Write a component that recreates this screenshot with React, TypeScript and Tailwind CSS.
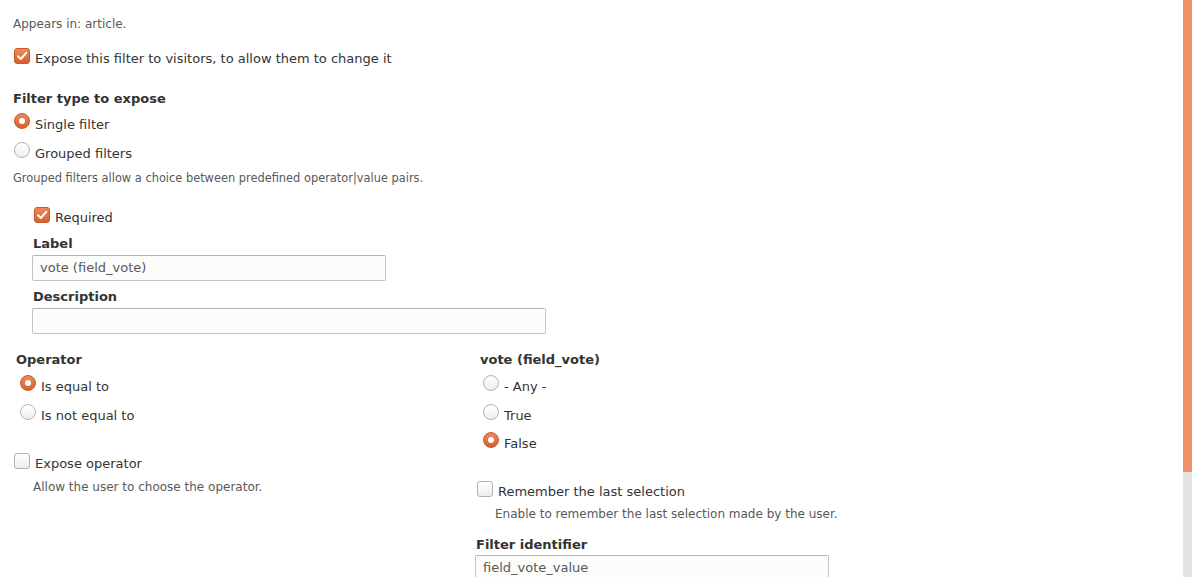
import React from "react";

const Checkbox = ({ checked = false, shift = "mb-[6px]" }: { checked?: boolean; shift?: string }) => {
  return (
    <span
      className={`${shift} flex h-4 w-4 shrink-0 items-center justify-center rounded-[3px] border ${
        checked
          ? "border-[#c4592b] bg-gradient-to-b from-[#ec8a5b] to-[#d5612f]"
          : "border-[#b3b3b3] bg-gradient-to-b from-white to-[#ededed]"
      }`}
    >
      {checked && (
        <svg width="12" height="12" viewBox="0 0 12 12">
          <path d="M2 6.3 L4.8 9 L10.2 2.8" fill="none" stroke="white" strokeWidth="2" strokeLinecap="round" strokeLinejoin="round" />
        </svg>
      )}
    </span>
  );
};

const Radio = ({ checked = false }: { checked?: boolean }) => {
  return (
    <span
      className={`mb-[8px] flex h-4 w-4 shrink-0 items-center justify-center rounded-full border ${
        checked
          ? "border-[#c4592b] bg-gradient-to-b from-[#ec8a5b] to-[#d5612f]"
          : "border-[#b3b3b3] bg-gradient-to-b from-white to-[#eeeeee]"
      }`}
    >
      {checked && <span className="h-[6px] w-[6px] rounded-full bg-white" />}
    </span>
  );
};

const Heading = ({ children, className = "" }: { children: React.ReactNode; className?: string }) => (
  <div className={`flex h-[18px] items-center text-[13px] font-bold text-[#333] ${className}`}>{children}</div>
);

const Desc = ({ children, className = "" }: { children: React.ReactNode; className?: string }) => (
  <div className={`flex h-4 items-center text-[#595959] ${className}`}>{children}</div>
);

const Option = ({
  children,
  className = "",
  control,
}: {
  children: React.ReactNode;
  className?: string;
  control: React.ReactNode;
}) => (
  <div className={`flex h-5 items-center gap-[5px] text-[13px] text-[#333] ${className}`}>
    {control}
    <span>{children}</span>
  </div>
);

const TextInput = ({ value = "", className = "" }: { value?: string; className?: string }) => (
  <div
    className={`flex h-[26px] items-center rounded-[2px] border border-[#c4c4c4] border-t-[#b4b4b4] bg-[#fcfcfa] px-[7px] text-[13px] text-[#595959] ${className}`}
  >
    {value}
  </div>
);

export default function App() {
  return (
    <div
      className="flex h-[577px] w-[1192px] overflow-hidden bg-white"
      style={{ fontFamily: '"DejaVu Sans", Verdana, sans-serif' }}
    >
      <div className="flex-1 pl-[13px]">
        <div className="mt-[15px] flex h-[18px] items-center text-[12px] text-[#595959]">Appears in: article.</div>
        <Option className="mt-[16px] ml-[1px]" control={<Checkbox checked />}>
          Expose this filter to visitors, to allow them to change it
        </Option>

        <Heading className="mt-[21px]">Filter type to expose</Heading>
        <Option className="mt-[7px] ml-[1px]" control={<Radio checked />}>
          Single filter
        </Option>
        <Option className="mt-[9px] ml-[1px]" control={<Radio />}>
          Grouped filters
        </Option>
        <Desc className="mt-[7px] text-[11.4px]">Grouped filters allow a choice between predefined operator|value pairs.</Desc>

        <div className="pl-[19px]">
          <Option className="mt-[21px] ml-[2px]" control={<Checkbox checked />}>
            Required
          </Option>
          <Heading className="mt-[7px] ml-[1px]">Label</Heading>
          <TextInput className="mt-[2px] w-[354px]" value="vote (field_vote)" />
          <Heading className="mt-[7px] ml-[1px]">Description</Heading>
          <TextInput className="mt-[2px] w-[514px]" />
        </div>

        <div className="mt-[17px] grid grid-cols-[462px_1fr]">
          <div>
            <Heading className="ml-[3px]">Operator</Heading>
            <Option className="mt-[8px] ml-[7px]" control={<Radio checked />}>
              Is equal to
            </Option>
            <Option className="mt-[9px] ml-[7px]" control={<Radio />}>
              Is not equal to
            </Option>
            <Option className="mt-[28px] ml-[1px]" control={<Checkbox shift="mb-[7px]" />}>
              Expose operator
            </Option>
            <Desc className="mt-[5px] ml-[20px] text-[12px]">Allow the user to choose the operator.</Desc>
          </div>
          <div>
            <Heading className="ml-[5px]">vote (field_vote)</Heading>
            <Option className="mt-[8px] ml-[8px]" control={<Radio />}>
              - Any -
            </Option>
            <Option className="mt-[9px] ml-[8px]" control={<Radio />}>
              True
            </Option>
            <Option className="mt-[8px] ml-[8px]" control={<Radio checked />}>
              False
            </Option>
            <Option className="mt-[28px] ml-[2px]" control={<Checkbox shift="mb-[7px]" />}>
              Remember the last selection
            </Option>
            <Desc className="mt-[4px] ml-[20px] text-[12px]">Enable to remember the last selection made by the user.</Desc>
            <Heading className="mt-[14px] ml-[1px]">Filter identifier</Heading>
            <TextInput className="mt-[1px] w-[354px]" value="field_vote_value" />
          </div>
        </div>
      </div>
      <div className="flex w-[9px] flex-col">
        <div className="h-[472px] bg-[#f0916a]" />
        <div className="flex-1 bg-[#e3e3e3]" />
      </div>
    </div>
  );
}
